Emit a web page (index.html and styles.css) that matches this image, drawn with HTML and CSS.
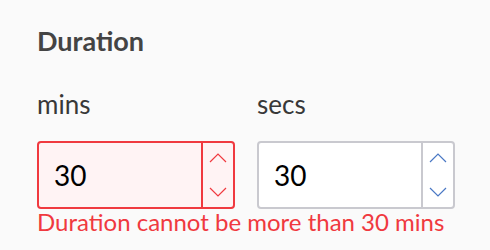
FILE: index.html
```html
<!DOCTYPE html>
<html>
<head>
<meta charset="utf-8">
<link rel="stylesheet" href="styles.css">
</head>
<body>
<div class="panel">
  <h2 class="title">Duration</h2>
  <div class="fields">
    <div class="field">
      <div class="label">mins</div>
      <div class="input input-error">
        <div class="value">30</div>
        <div class="spinner">
          <svg class="chev" width="18" height="10" viewBox="0 0 18 10"><path d="M1 9 L9 1 L17 9" fill="none" stroke="currentColor" stroke-width="1.2"/></svg>
          <svg class="chev" width="18" height="10" viewBox="0 0 18 10"><path d="M1 1 L9 9 L17 1" fill="none" stroke="currentColor" stroke-width="1.2"/></svg>
        </div>
      </div>
    </div>
    <div class="field">
      <div class="label">secs</div>
      <div class="input">
        <div class="value">30</div>
        <div class="spinner">
          <svg class="chev" width="18" height="10" viewBox="0 0 18 10"><path d="M1 9 L9 1 L17 9" fill="none" stroke="currentColor" stroke-width="1.2"/></svg>
          <svg class="chev" width="18" height="10" viewBox="0 0 18 10"><path d="M1 1 L9 9 L17 1" fill="none" stroke="currentColor" stroke-width="1.2"/></svg>
        </div>
      </div>
    </div>
  </div>
  <div class="error">Duration cannot be more than 30 mins</div>
</div>
</body>
</html>
```
FILE: styles.css
```css
html, body {
  margin: 0;
  padding: 0;
  background: #fafafa;
  font-family: "Lato", "Open Sans", sans-serif;
}
.panel {
  padding: 25px 0 0 37px;
}
.title {
  margin: 0;
  font-size: 27px;
  line-height: 32px;
  font-weight: 700;
  color: #444;
}
.fields {
  display: flex;
  gap: 22px;
  margin-top: 32px;
}
.field {
  width: 198px;
}
.label {
  font-size: 26px;
  line-height: 30px;
  color: #383838;
  margin-bottom: 22px;
}
.input {
  box-sizing: border-box;
  height: 68px;
  display: flex;
  border: 2px solid #c9c9cf;
  border-radius: 4px;
  background: #fff;
  color: #4a78c4;
}
.input-error {
  border-color: #f0393f;
  background: #fff3f4;
  color: #f0393f;
}
.value {
  flex: 1;
  display: flex;
  align-items: center;
  padding-left: 15px;
  font-size: 28px;
  color: #000;
}
.spinner {
  box-sizing: border-box;
  width: 32px;
  border-left: 2px solid;
  border-color: inherit;
  display: flex;
  flex-direction: column;
  align-items: center;
  justify-content: space-between;
  padding: 10px 0 10px;
}
.chev {
  display: block;
}
.error {
  font-size: 24px;
  line-height: 28px;
  margin-top: -1px;
  color: #f0393f;
}
```
